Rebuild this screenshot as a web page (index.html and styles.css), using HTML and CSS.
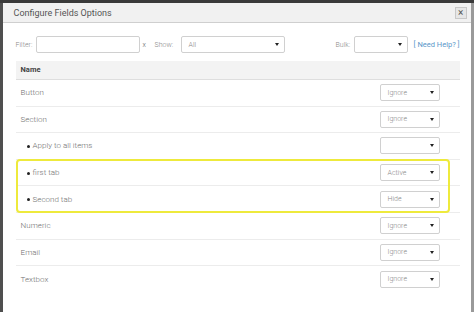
FILE: index.html
```html
<!DOCTYPE html>
<html lang="en">
<head>
  <meta charset="UTF-8" />
  <meta name="viewport" content="width=device-width, initial-scale=1.0"/>
  <title>Configure Fields Options</title>
  <link rel="stylesheet" href="styles.css">
</head>
<body>
  <div class="screen">
    <div class="edge-left"></div>
    <div class="modal">
      <div class="modal-header">
        <span class="modal-title">Configure Fields Options</span>
        <span class="close-btn">&times;</span>
      </div>

      <div class="modal-body">
        <div class="toolbar">
          <label class="lbl">Filter:</label>
          <div class="input filter-input"></div>
          <span class="clear">x</span>
          <label class="lbl show-lbl">Show:</label>
          <div class="select show-select"><span>All</span><i class="caret"></i></div>
          <label class="lbl bulk-lbl">Bulk:</label>
          <div class="select bulk-select"><span></span><i class="caret"></i></div>
          <a class="help" href="#">[ Need Help? ]</a>
        </div>

        <div class="fields">
          <div class="fields-head">Name</div>

          <div class="row">
            <span class="name">Button</span>
            <div class="select row-select"><span>Ignore</span><i class="caret"></i></div>
          </div>
          <div class="row">
            <span class="name">Section</span>
            <div class="select row-select"><span>Ignore</span><i class="caret"></i></div>
          </div>
          <div class="row sub">
            <span class="name">Apply to all items</span>
            <div class="select row-select"><span></span><i class="caret"></i></div>
          </div>

          <div class="highlight">
            <div class="row sub">
              <span class="name">first tab</span>
              <div class="select row-select"><span>Active</span><i class="caret"></i></div>
            </div>
            <div class="row sub">
              <span class="name">Second tab</span>
              <div class="select row-select"><span>Hide</span><i class="caret"></i></div>
            </div>
          </div>

          <div class="row">
            <span class="name">Numeric</span>
            <div class="select row-select"><span>Ignore</span><i class="caret"></i></div>
          </div>
          <div class="row">
            <span class="name">Email</span>
            <div class="select row-select"><span>Ignore</span><i class="caret"></i></div>
          </div>
          <div class="row last">
            <span class="name">Textbox</span>
            <div class="select row-select"><span>Ignore</span><i class="caret"></i></div>
          </div>
        </div>
      </div>
    </div>
    <div class="edge-right"></div>
  </div>
</body>
</html>
```

FILE: styles.css
```css
body {
  margin: 0;
  font-family: Roboto, "Liberation Sans", sans-serif;
  font-weight: 300;
  background: #ffffff;
  color: #707070;
}

.screen {
  display: flex;
  width: 474px;
  height: 312px;
  overflow: hidden;
  border-top: 3px solid #3a3a3a;
  box-sizing: border-box;
}

.edge-left {
  width: 3px;
  background: #4f4f4f;
}

.edge-right {
  width: 4px;
  background: #9a9a9a;
}

.modal {
  flex: 1;
  background: #fff;
  display: flex;
  flex-direction: column;
}

.modal-header {
  height: 19px;
  background: #f1f1f1;
  border-bottom: 1px solid #cfcfcf;
  display: flex;
  align-items: center;
  padding: 0 4px 0 11px;
}

.modal-title {
  flex: 1;
  font-size: 9px;
  font-weight: 400;
  color: #555;
}

.close-btn {
  width: 10px;
  height: 10px;
  border: 1px solid #c8c8c8;
  background: #e6e6e6;
  color: #555;
  font-size: 10px;
  font-weight: 400;
  line-height: 9px;
  text-align: center;
  margin-top: 1px;
}

.modal-body {
  padding: 13px 11px 0 13px;
}

/* toolbar */
.toolbar {
  display: flex;
  align-items: center;
  height: 17px;
  font-size: 7px;
  white-space: nowrap;
}

.lbl {
  color: #888;
  width: 20px;
}

.input,
.select {
  box-sizing: border-box;
  height: 17px;
  border: 1px solid #d0d0d0;
  border-radius: 2px;
  background: #fff;
}

.filter-input {
  width: 104px;
}

.clear {
  color: #666;
  margin-left: 3px;
  width: 12px;
}

.show-lbl {
  width: 26px;
}

.select {
  display: flex;
  align-items: center;
  padding: 0 5px 0 7px;
  font-size: 7px;
  color: #888;
}

.select span {
  flex: 1;
}

.caret {
  width: 0;
  height: 0;
  border-left: 2px solid transparent;
  border-right: 2px solid transparent;
  border-top: 3px solid #222;
}

.show-select {
  width: 104px;
}

.bulk-lbl {
  margin-left: 51px;
  width: 18px;
}

.bulk-select {
  width: 54px;
}

.help {
  margin-left: 6px;
  color: #5b97c9;
  text-decoration: none;
  font-size: 7.5px;
  font-weight: 400;
}

/* table */
.fields {
  margin-top: 8px;
  font-size: 8px;
}

.fields-head {
  height: 18px;
  line-height: 18px;
  background: #f3f3f3;
  border-bottom: 1px solid #dedede;
  padding-left: 5px;
  font-weight: bold;
  color: #444;
  font-size: 7.5px;
}

.row {
  height: 26.6px;
  box-sizing: border-box;
  border-bottom: 1px solid #ececec;
  display: flex;
  align-items: center;
  padding: 0 20px 0 5px;
}

.row.last {
  border-bottom: none;
}

.row .name {
  flex: 1;
}

.row.sub .name {
  padding-left: 12px;
  position: relative;
}

.row.sub .name::before {
  content: "";
  position: absolute;
  left: 6px;
  top: 50%;
  width: 3px;
  height: 3px;
  margin-top: -1px;
  border-radius: 50%;
  background: #222;
}

.row-select {
  width: 60px;
}

.highlight {
  position: relative;
}

.highlight::after {
  content: "";
  position: absolute;
  left: 0;
  top: -1px;
  right: 10px;
  bottom: 0;
  border: 2px solid #eeea3c;
  border-radius: 4px;
  pointer-events: none;
}
```
